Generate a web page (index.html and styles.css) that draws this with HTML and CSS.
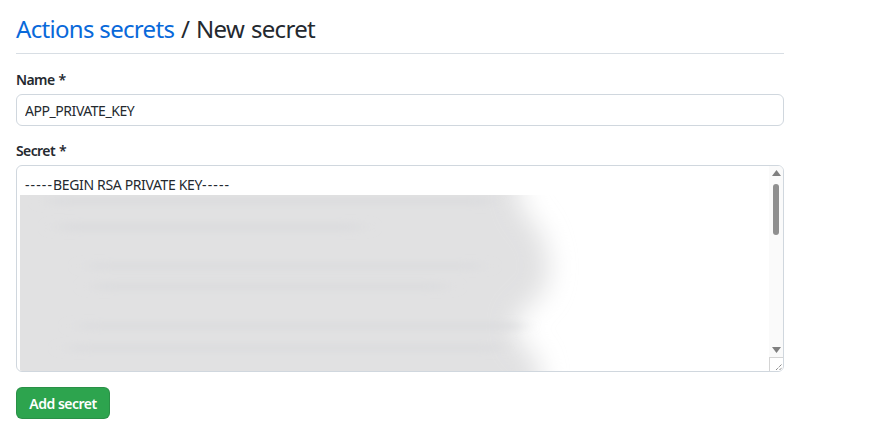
FILE: index.html
```html
<!DOCTYPE html>
<html lang="en">
<head>
    <meta charset="UTF-8">
    <meta name="viewport" content="width=device-width, initial-scale=1.0">
    <title>Actions secrets / New secret</title>
    <link rel="stylesheet" href="styles.css">
</head>
<body>

<div class="container">
    <h1 class="page-title"><a href="#">Actions secrets</a> / New secret</h1>

    <form class="secret-form">
        <div class="field">
            <label for="secretName">Name *</label>
            <input type="text" id="secretName" class="name-input" value="APP_PRIVATE_KEY">
        </div>

        <div class="field">
            <label>Secret *</label>
            <div class="secret-box">
                <div class="secret-text"><span class="dashes">-----</span>BEGIN RSA PRIVATE KEY<span class="dashes">-----</span></div>

                <!-- the rest of the key is blurred out -->
                <svg class="secret-blur" width="600" height="177" viewBox="0 0 600 177" aria-hidden="true">
                    <defs>
                        <filter id="soft" x="-10%" y="-30%" width="120%" height="160%">
                            <feGaussianBlur stdDeviation="13"></feGaussianBlur>
                        </filter>
                        <filter id="softer" x="-10%" y="-300%" width="120%" height="700%">
                            <feGaussianBlur stdDeviation="10 3.5"></feGaussianBlur>
                        </filter>
                    </defs>
                    <polygon filter="url(#soft)" fill="#e1e1e2" points="-40,-40 495,-40 500,10 522,40 530,70 525,95 495,125 498,145 518,165 524,220 -40,220"></polygon>
                    <g filter="url(#softer)" fill="#dbdcde">
                        <rect x="30" y="3" width="440" height="7"></rect>
                        <rect x="40" y="28" width="300" height="8"></rect>
                        <rect x="70" y="68" width="390" height="6"></rect>
                        <rect x="75" y="88" width="350" height="7"></rect>
                        <rect x="60" y="128" width="440" height="6"></rect>
                        <rect x="50" y="150" width="430" height="6"></rect>
                    </g>
                </svg>

                <div class="scrollbar">
                    <svg class="scroll-arrow" width="9" height="6" viewBox="0 0 9 6" aria-hidden="true"><polygon points="4.5,0 9,6 0,6" fill="#7f7f7f"></polygon></svg>
                    <div class="scroll-track"><div class="scroll-thumb"></div></div>
                    <svg class="scroll-arrow" width="9" height="6" viewBox="0 0 9 6" aria-hidden="true"><polygon points="0,0 9,0 4.5,6" fill="#7f7f7f"></polygon></svg>
                    <div class="resizer">
                        <svg width="13" height="13" viewBox="0 0 13 13" aria-hidden="true">
                            <path d="M6 12 L12 6 M9.5 12 L12 9.5" stroke="#555" stroke-width="1" stroke-dasharray="1 1" fill="none"></path>
                        </svg>
                    </div>
                </div>
            </div>
        </div>

        <button type="button" class="add-button">Add secret</button>
    </form>
</div>

</body>
</html>
```

FILE: styles.css
```css
/* General Styles */
body {
    font-family: 'Noto Sans', 'Open Sans', sans-serif;
    background: #fff;
    color: #24292f;
    margin: 0;
    padding: 0;
    font-size: 14px;
}

.container {
    width: 768px;
    padding: 0 16px;
}

.page-title {
    font-size: 24px;
    font-weight: 400;
    line-height: 36px;
    margin: 0 0 16px 0;
    padding: 11px 0 6px 0;
    border-bottom: 1px solid #d8dee4;
    letter-spacing: -0.68px;
    word-spacing: 1.2px;
}

.page-title a {
    color: #0969da;
    text-decoration: none;
    word-spacing: 0;
}

.field {
    margin-bottom: 15px;
}

.field label {
    display: block;
    font-weight: 600;
    font-size: 14px;
    line-height: 20px;
    margin-bottom: 4px;
    letter-spacing: -0.6px;
    word-spacing: 1px;
}

.name-input {
    display: block;
    box-sizing: border-box;
    width: 100%;
    height: 32px;
    padding: 0 8px;
    font-family: inherit;
    font-size: 14px;
    letter-spacing: -0.45px;
    color: #24292f;
    border: 1px solid #d0d7de;
    border-radius: 6px;
    outline: none;
    background: #fff;
}

.secret-box {
    position: relative;
    box-sizing: border-box;
    height: 207px;
    border: 1px solid #d0d7de;
    border-radius: 6px;
    overflow: hidden;
    background: #fff;
}

.secret-text {
    padding: 9px 8px 0 8px;
    line-height: 20px;
    letter-spacing: -0.35px;
}

.dashes {
    letter-spacing: 1.1px;
}

.secret-blur {
    position: absolute;
    left: 3px;
    top: 29px;
}

.scrollbar {
    position: absolute;
    right: 0;
    top: 0;
    bottom: 0;
    width: 14px;
    background: #fafafa;
    display: flex;
    flex-direction: column;
    align-items: center;
}

.scroll-arrow {
    flex: none;
    margin: 4px 0;
}

.scroll-track {
    flex: 1;
    width: 100%;
    display: flex;
    justify-content: center;
}

.scroll-thumb {
    width: 6px;
    height: 51px;
    margin-top: 4px;
    border-radius: 3px;
    background: #8f8f8f;
}

.resizer {
    flex: none;
    box-sizing: border-box;
    width: 14px;
    height: 14px;
    background: #fff;
    border-top: 1px solid #d4d4d4;
    border-left: 1px solid #d4d4d4;
}

.resizer svg {
    display: block;
}

.add-button {
    display: block;
    width: 94px;
    height: 32px;
    padding: 0;
    font-family: inherit;
    font-size: 14px;
    font-weight: 600;
    letter-spacing: -0.5px;
    color: #fff;
    background: #2da44e;
    border: 1px solid rgba(27, 31, 36, 0.15);
    border-radius: 6px;
    cursor: pointer;
}
```
